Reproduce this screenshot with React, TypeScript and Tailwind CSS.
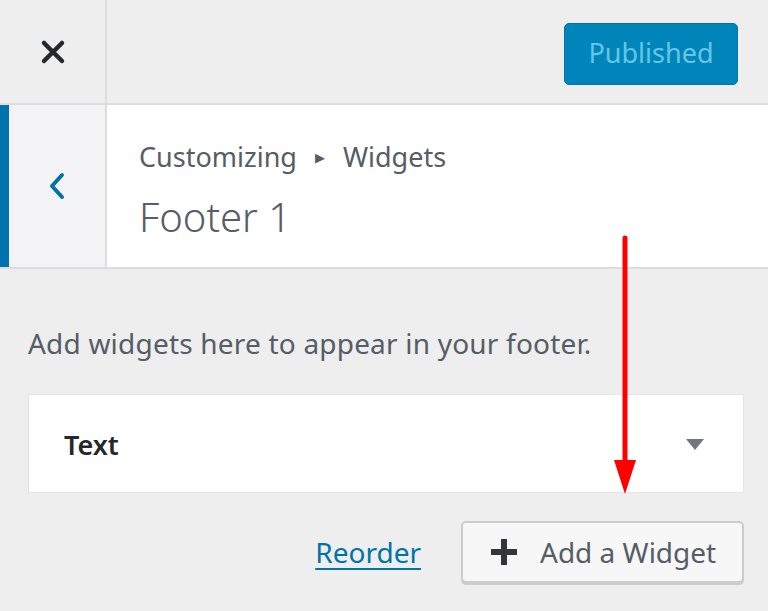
import React from "react";

function ArrowOverlay() {
  return (
    <svg className="absolute left-[610px] top-[234px]" width="30" height="262" viewBox="0 0 30 262">
      <line x1="15" y1="4" x2="15" y2="230" stroke="#ff0000" strokeWidth="5" strokeLinecap="round" />
      <polygon points="4,226 26,226 15,260" fill="#ff0000" />
    </svg>
  );
}

export default function App() {
  return (
    <div
      className="relative w-[768px] h-[611px] overflow-hidden bg-[#eeeeee] text-[#555d66]"
      style={{ fontFamily: '"Noto Sans", "Open Sans", sans-serif' }}
    >
      {/* Top actions bar */}
      <div className="flex h-[105px] border-b-2 border-[#dddddd]">
        <div className="w-[107px] flex items-center justify-center border-r-2 border-[#dddddd]">
          <svg width="26" height="26" viewBox="0 0 26 26">
            <path d="M4 4 L22 22 M22 4 L4 22" stroke="#23282d" strokeWidth="4.5" strokeLinecap="round" />
          </svg>
        </div>
        <div className="flex-1 flex items-center justify-end pr-[30px] pt-[4px]">
          <button className="w-[174px] h-[62px] rounded-[5px] bg-[#0085ba] text-[#66c5e6] text-[27px] border border-[#0073aa]">
            Published
          </button>
        </div>
      </div>

      {/* Section title */}
      <div className="flex h-[164px] bg-white border-b-2 border-[#dddddd]">
        <div className="w-[107px] flex items-center justify-center bg-[#f3f3f5] border-l-[9px] border-l-[#0073aa] border-r-2 border-r-[#dddddd]">
          <svg width="22" height="34" viewBox="0 0 22 34">
            <path d="M16 6 L6 17 L16 28" stroke="#0073aa" strokeWidth="4" fill="none" strokeLinecap="round" strokeLinejoin="round" />
          </svg>
        </div>
        <div className="flex flex-col pl-[32px] pt-[32px]">
          <div className="flex items-center text-[27px] leading-[40px]">
            <span>Customizing</span>
            <span className="mx-[18px] text-[13px]">▶</span>
            <span>Widgets</span>
          </div>
          <div className="text-[40px] leading-[56px] font-light text-[#555d66] mt-[12px]">Footer 1</div>
        </div>
      </div>

      {/* Body */}
      <div className="pl-[28px] pr-[24px] pt-[55px]">
        <p className="text-[28px] leading-[38px] tracking-[0.2px]">Add widgets here to appear in your footer.</p>
        <div className="mt-[32px] h-[99px] bg-white border border-[#e5e5e5] flex items-center justify-between pl-[35px] pr-[38px]">
          <span className="text-[27px] font-semibold text-[#23282d] pt-[4px]">Text</span>
          <svg width="20" height="12" viewBox="0 0 20 12">
            <polygon points="1,1 19,1 10,12" fill="#72777c" />
          </svg>
        </div>
        <div className="mt-[28px] flex items-center justify-end gap-[40px]">
          <a className="text-[28px] text-[#0073aa] underline underline-offset-[5px]">Reorder</a>
          <button className="w-[283px] h-[62px] rounded-[5px] bg-[#f7f7f7] border-2 border-[#cccccc] shadow-[0_2px_0_#cccccc] flex items-center pl-[25px] gap-[20px] text-[28px] text-[#555d66]">
            <svg width="32" height="32" viewBox="0 0 32 32">
              <path d="M16 3 V29 M3 16 H29" stroke="#32373c" strokeWidth="6" />
            </svg>
            <span>Add a Widget</span>
          </button>
        </div>
      </div>

      <ArrowOverlay />
    </div>
  );
}
